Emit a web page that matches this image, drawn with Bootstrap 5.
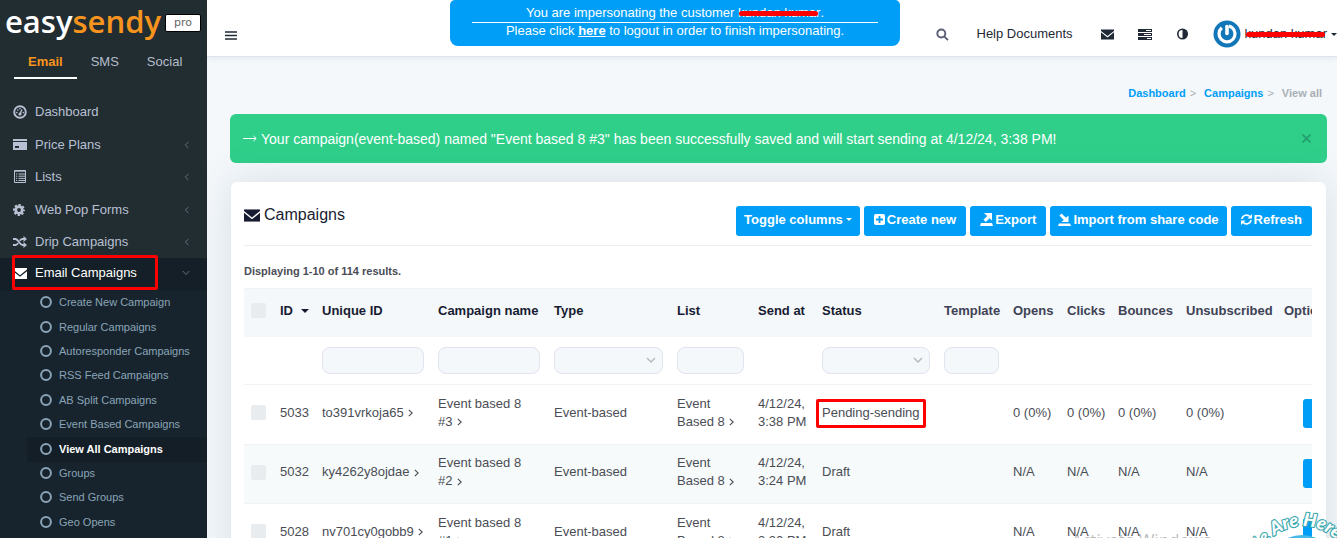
<!DOCTYPE html>
<html lang="en">
<head>
<meta charset="utf-8">
<meta name="viewport" content="width=device-width, initial-scale=1">
<title>Campaigns | View all</title>
<link href="https://cdn.jsdelivr.net/npm/bootstrap@5.3.0/dist/css/bootstrap.min.css" rel="stylesheet">
<style>
  :root { --brand: #009ef7; --accent: #f7941d; --mark: #ff0000; --canvas: #f4f8fb; }
  body { font-family: "Liberation Sans", Arial, sans-serif; font-size: 13px; line-height: 18px; color: #4a4d55; background: var(--canvas); }
  svg { display: block; flex: none; }
  a { text-decoration: none; }

  /* sidebar */
  .side { width: 207px; background: #222d32; }
  .logo { height: 42px; padding-left: 5px; font: 600 31px/42px "Open Sans", sans-serif; color: #fff; }
  .logo .orange { color: var(--accent); }
  .logo .tag { font: 11px/15px "DejaVu Sans", sans-serif; color: #666; background: #fff; border: 1px solid #000; border-radius: 2px; width: 36px; height: 18px; margin: 4px 0 0 4px; text-align: center; }
  .tabs { padding-left: 14px; }
  .tabs a { padding: 11px 14px 6px; color: #b4bdcb; border-bottom: 2px solid transparent; }
  .tabs a.on { color: var(--accent); font-weight: 700; border-color: #fff; }
  .menu { margin-top: 17px; }
  .menu > li > a { height: 32px; padding: 0 17px 1px 13px; color: #b9c0d3; }
  .menu > li:nth-child(even) { padding-top: 1px; }
  .menu .txt { margin-left: 8px; }
  .menu .chev { margin-left: auto; color: #5d6f7d; }
  .menu .open { background: #151f27; }
  .menu .open > a { color: #fff; position: relative; padding-bottom: 4px; }
  .menu .open > a::after { content: ""; position: absolute; left: 12px; top: -4px; width: 146px; height: 35px; border: 3px solid var(--mark); border-radius: 2px; }
  .sub { display: grid; grid-auto-rows: 1fr; height: 244px; background: #18242d; }
  .sub-wrap { background: #18242d; height: 300px; }
  .sub a { margin-left: 27px; padding: 0 0 2px 13px; color: #8aa4b8; font-size: 11px; gap: 7px; height: 100%; }
  .sub a.on { background: #141e26; color: #fff; font-weight: 700; }
  .sub svg { color: #8aa4b8; }

  /* top bar */
  .topbar { height: 57px; background: #fff; border-bottom: 1px solid #dfe4ea; box-shadow: 0 1px 6px rgba(60,80,110,.1); padding-left: 18px; color: #1f2a36; }
  .bars { padding: 31px 0 0; color: #4a5568; }
  .imp { width: 450px; height: 46px; margin-left: 213px; background: var(--brand); color: #fff; border-radius: 5px 5px 8px 8px; padding: 4px 22px 0; text-align: center; }
  .imp div { border-bottom: 1px solid #fff; }
  .imp p { line-height: 16px; }
  .imp a { color: #fff; font-weight: 700; text-decoration: underline; }
  .redact { position: relative; display: inline-block; }
  .redact::after { content: ""; position: absolute; left: 1px; right: 2px; top: 7px; height: 5px; background: var(--mark); border-radius: 3px; }
  .tools { margin-top: 20px; }
  .tools a { color: inherit; }
  .tools button, .bars, .x-btn { background: none; border: 0; padding-left: 0; padding-right: 0; color: inherit; }

  /* page body */
  .page { padding: 27px 10px 0 23px; }
  .crumbs { font-size: 11px; font-weight: 700; padding-right: 5px; margin-bottom: 12px; color: #a9afb5; }
  .crumbs a { color: var(--brand); }
  .crumbs .sep { font-weight: 400; }
  .note { height: 49px; background: #2fcf8a; color: #fff; border-radius: 6px; padding: 0 15px 0 13px; font-size: 14px; }
  .panel { margin: 19px 1px 0; padding: 24px 14px 0 13px; background: #fff; border-radius: 6px; box-shadow: 0 0 40px rgba(70,90,110,.16); min-height: 460px; }
  .panel-top { height: 40px; border-bottom: 1px solid #eceef1; }
  .panel-top h1 { font-size: 16px; line-height: 18px; font-weight: 400; color: #181c32; }
  .act { height: 30px; padding: 0 10px 3px; font-size: 13px; font-weight: 700; color: #fff; background: var(--brand); border: 0; border-radius: 3px; white-space: nowrap; gap: 2px; }
  .act.snug { padding-left: 8px; padding-right: 8px; }
  .act.tog { gap: 3px; }
  .tri { width: 0; height: 0; border: 3px solid transparent; border-top-color: currentColor; border-bottom: 0; }
  .tri.big { border-width: 4px 4px 0; }
  .sum { font-size: 11px; font-weight: 700; padding: 16px 0 8px; }

  /* results grid */
  .grid { table-layout: fixed; width: 1134px; border-collapse: collapse; }
  .grid th, .grid td { padding: 0 7px; vertical-align: middle; }
  .grid td { border-top: 1px solid #f0f2f4; height: 60px; padding-bottom: 4px; }
  .grid th { height: 48px; background: var(--canvas); border-top: 1px solid #f0f2f4; white-space: nowrap; color: #3f4254; padding-bottom: 4px; }
  .grid th a { color: #181c32; }
  .grid .filters td { height: 48px; padding-bottom: 0; border-top: 0; }
  .grid .alt td { background: #f6fafb; height: 59px; }
  .grid td a { color: inherit; }
  .fld { display: block; width: 100%; height: 27px; border: 1px solid #e1e3ee; border-radius: 8px; background-color: var(--canvas); appearance: none; }
  select.fld { background-image: url("data:image/svg+xml,%3Csvg xmlns='http://www.w3.org/2000/svg' width='10' height='6'%3E%3Cpath d='M1 1l4 4 4-4' fill='none' stroke='%23b5b9c0' stroke-width='1.5'/%3E%3C/svg%3E"); background-repeat: no-repeat; background-position: right 6px center; }
  .tick { display: block; appearance: none; width: 15px; height: 15px; background: #e8ecef; border-radius: 2px; margin: 0; }
  .grid td.opt { padding-left: 26px; padding-bottom: 0; }
  .opt .act { width: 60px; height: 29px; }
  .ringed { position: relative; }
  .ringed::after { content: ""; position: absolute; left: -6px; top: -5px; width: 110px; height: 29px; border: 3px solid var(--mark); border-radius: 2px; }
  .fwd { display: inline-block; margin-left: 1px; }

  /* overlays */
  .wm { position: absolute; right: 126px; bottom: -14px; font: 17px/24px "Open Sans", sans-serif; color: rgba(120,120,120,.5); white-space: nowrap; }
  .chat { position: absolute; right: 0; bottom: 0; }
</style>
</head>
<body>
<svg width="0" height="0" class="position-absolute" aria-hidden="true">
  <symbol id="mail" viewBox="0 0 14 11"><path fill="currentColor" d="M0 0h14v1.6L7 7.2 0 1.6zM0 3.2l7 5.6 7-5.6V11H0z"/></symbol>
  <symbol id="left" viewBox="0 0 6 8"><path d="M4.5 1L1.2 4l3.300 3" fill="none" stroke="currentColor"/></symbol>
  <symbol id="right" viewBox="0 0 5 8"><path d="M.8.8L4.200 4 .8 7.200" fill="none" stroke="currentColor" stroke-width="1.100"/></symbol>
  <symbol id="ring" viewBox="0 0 12 12"><circle cx="6" cy="6" r="4.900" fill="none" stroke="currentColor" stroke-width="2"/></symbol>
</svg>
<div class="d-flex vh-100 overflow-hidden position-relative">
  <aside class="side flex-shrink-0 overflow-hidden">
    <div class="logo d-flex align-items-center"><span>easy<span class="orange">sendy</span></span><span class="tag">pro</span></div>
    <nav class="tabs d-flex"><a href="#" class="on">Email</a><a href="#">SMS</a><a href="#">Social</a></nav>
    <ul class="menu list-unstyled mb-0">
      <li><a href="#" class="d-flex align-items-center"><svg width="14" height="14" viewBox="0 0 14 14"><g fill="none" stroke="currentColor"><circle cx="7" cy="7" r="5.800" stroke-width="1.900"/><path d="M7 9l2-4.500" stroke-width="1.400"/></g><g fill="currentColor"><circle cx="7" cy="9" r="1.600"/><circle cx="3.800" cy="7.600" r=".8"/><circle cx="4.800" cy="5" r=".8"/><circle cx="7" cy="3.800" r=".8"/><circle cx="10.300" cy="7.600" r=".8"/></g></svg><span class="txt">Dashboard</span></a></li>
      <li><a href="#" class="d-flex align-items-center"><svg width="14" height="11" viewBox="0 0 14 11"><path fill="currentColor" fill-rule="evenodd" d="M0 0h14v2H0zM0 3h14v8H0zM2 7v2h4V7z"/></svg><span class="txt">Price Plans</span><svg class="chev" width="6" height="8"><use href="#left"/></svg></a></li>
      <li><a href="#" class="d-flex align-items-center"><svg width="14" height="13" viewBox="0 0 14 13"><path fill="none" stroke="currentColor" d="M1.500.500h11v12h-11z"/><path stroke="currentColor" d="M1 1.200h12M3 4h1.200M5.500 4H12M3 6.200h1.200M5.500 6.200H12M3 8.400h1.200M5.500 8.400H12M3 10.500h1.200M5.500 10.500H12"/></svg><span class="txt">Lists</span><svg class="chev" width="6" height="8"><use href="#left"/></svg></a></li>
      <li><a href="#" class="d-flex align-items-center"><svg width="14" height="12" viewBox="0 0 14 12"><circle cx="6" cy="6" r="3.300" fill="none" stroke="currentColor" stroke-width="2.800"/><circle cx="6" cy="6" r="5" fill="none" stroke="currentColor" stroke-width="2" stroke-dasharray="2.200 1.730" stroke-dashoffset="1.100"/></svg><span class="txt">Web Pop Forms</span><svg class="chev" width="6" height="8"><use href="#left"/></svg></a></li>
      <li><a href="#" class="d-flex align-items-center"><svg width="14" height="12" viewBox="0 0 14 12"><path d="M0 3h2.500c3 0 4 6 7 6H11M0 9h2.500c1.200 0 2-.9 2.600-1.900M6.800 4.800C7.500 3.700 8.300 3 9.500 3H11" fill="none" stroke="currentColor" stroke-width="1.800"/><path fill="currentColor" d="M10.500 0L14 3l-3.500 3zM10.500 6L14 9l-3.500 3z"/></svg><span class="txt">Drip Campaigns</span><svg class="chev" width="6" height="8"><use href="#left"/></svg></a></li>
      <li class="open"><a href="#" class="d-flex align-items-center"><svg width="14" height="11"><use href="#mail"/></svg><span class="txt">Email Campaigns</span><svg class="chev" width="8" height="6" viewBox="0 0 8 6"><path d="M.8 1L4 4.500 7.200 1" fill="none" stroke="currentColor"/></svg></a>
        <div class="sub-wrap">
        <ul class="sub list-unstyled">
          <li><a href="#" class="d-flex align-items-center"><svg width="12" height="12"><use href="#ring"/></svg>Create New Campaign</a></li>
          <li><a href="#" class="d-flex align-items-center"><svg width="12" height="12"><use href="#ring"/></svg>Regular Campaigns</a></li>
          <li><a href="#" class="d-flex align-items-center"><svg width="12" height="12"><use href="#ring"/></svg>Autoresponder Campaigns</a></li>
          <li><a href="#" class="d-flex align-items-center"><svg width="12" height="12"><use href="#ring"/></svg>RSS Feed Campaigns</a></li>
          <li><a href="#" class="d-flex align-items-center"><svg width="12" height="12"><use href="#ring"/></svg>AB Split Campaigns</a></li>
          <li><a href="#" class="d-flex align-items-center"><svg width="12" height="12"><use href="#ring"/></svg>Event Based Campaigns</a></li>
          <li><a href="#" class="on d-flex align-items-center"><svg width="12" height="12"><use href="#ring"/></svg>View All Campaigns</a></li>
          <li><a href="#" class="d-flex align-items-center"><svg width="12" height="12"><use href="#ring"/></svg>Groups</a></li>
          <li><a href="#" class="d-flex align-items-center"><svg width="12" height="12"><use href="#ring"/></svg>Send Groups</a></li>
          <li><a href="#" class="d-flex align-items-center"><svg width="12" height="12"><use href="#ring"/></svg>Geo Opens</a></li>
        </ul>
        </div>
      </li>
    </ul>
  </aside>

  <div class="flex-grow-1 overflow-hidden">
    <header class="topbar d-flex align-items-start">
      <button class="bars" type="button" aria-label="Menu"><svg width="12" height="9" viewBox="0 0 12 9"><path stroke="currentColor" stroke-width="1.600" d="M0 1h12M0 4.500h12M0 8h12"/></svg></button>
      <div class="imp flex-shrink-0">
        <div>You are impersonating the customer <span class="redact">kundan kumar</span>.</div>
        <p class="mb-0">Please click <a href="#">here</a> to logout in order to finish impersonating.</p>
      </div>
      <nav class="tools d-flex align-items-center flex-grow-1 justify-content-end text-nowrap">
        <button type="button" aria-label="Search" class="p-0 me-4"><svg class="me-1" width="13" height="13" viewBox="0 0 13 13"><g fill="none" stroke="#5b5f75" stroke-width="1.900"><circle cx="5.300" cy="5.500" r="4"/><path d="M8.400 8.600l3.600 3.600"/></g></svg></button>
        <a href="#" class="me-4">Help Documents</a>
        <a href="#" class="me-4 ps-1" aria-label="Messages"><svg width="13" height="11"><use href="#mail"/></svg></a>
        <a href="#" class="me-4" aria-label="Tasks"><svg width="14" height="11" viewBox="0 0 14 11"><path fill="currentColor" fill-rule="evenodd" d="M0 0h14v3H0zM8 1v1h5V1zM0 4h14v3H0zM6 5v1h7V5zM0 8h14v3H0zM9 9v1h4V9z"/></svg></a>
        <button type="button" class="p-0 me-4" aria-label="Contrast"><svg width="13" height="12" viewBox="0 0 13 12"><circle cx="6.500" cy="6" r="4.700" fill="none" stroke="currentColor" stroke-width="1.600"/><path fill="currentColor" d="M6.500 1v10a5 5 0 000-10z"/></svg></button>
        <a href="#" class="d-flex align-items-center">
          <svg class="me-1" width="28" height="28" viewBox="0 0 28 28"><circle cx="14" cy="14" r="13.500" fill="#1277b8"/><path d="M8.800 7.800A8 8 0 1019 7.600c-1-.9-2-1.300-3-1.500" fill="none" stroke="#fff" stroke-width="3.200"/><path d="M14 6.500v7" stroke="#fff" stroke-width="3.600" stroke-linecap="round"/></svg>
          <span class="redact">kundan kumar</span><span class="tri ms-1"></span></a>
      </nav>
    </header>

    <main class="page">
      <nav class="crumbs d-flex justify-content-end gap-1"><a href="#">Dashboard</a><span class="sep me-1">&gt;</span><a href="#">Campaigns</a><span class="sep me-1">&gt;</span><span>View all</span></nav>
      <div class="note d-flex align-items-center" role="alert"><svg class="me-1" width="14" height="7" viewBox="0 0 14 7"><path d="M0 3.500h13M10.500 1L13.200 3.500 10.500 6" fill="none" stroke="#fff"/></svg><span>Your campaign(event-based) named "Event based 8 #3" has been successfully saved and will start sending at 4/12/24, 3:38 PM!</span>
        <button type="button" class="x-btn ms-auto" aria-label="Close"><svg width="11" height="9" viewBox="0 0 11 9"><path d="M1.500.500l8 8M9.500.500l-8 8" stroke="#25a06f" stroke-width="1.800"/></svg></button></div>

      <section class="panel">
        <div class="panel-top d-flex align-items-start">
          <h1 class="d-flex align-items-center mb-0"><svg width="16" height="13" class="me-1" viewBox="0 0 14 11"><use href="#mail"/></svg>Campaigns</h1>
          <div class="ms-auto d-flex gap-1 flex-shrink-0">
            <button type="button" class="act snug tog d-flex align-items-center">Toggle columns<span class="tri"></span></button>
            <button type="button" class="act d-flex align-items-center"><svg width="11" height="11" viewBox="0 0 11 11"><rect width="11" height="11" rx="1.800" fill="#fff"/><path d="M5.500 2v7M2 5.500h7" stroke="#009ef7" stroke-width="1.800"/></svg>Create new</button>
            <button type="button" class="act d-flex align-items-center"><svg width="13" height="14" viewBox="0 0 13 14"><path fill="#fff" d="M1 10h11l1 3H0zM4 0h8v7.500L9.600 5.200 5.800 9 3.500 6.800l3.700-3.900z"/></svg>Export</button>
            <button type="button" class="act snug d-flex align-items-center"><svg width="13" height="14" viewBox="0 0 13 14"><path fill="#fff" d="M1 10.500h11l1 2.500H0zM10.500 9H3.500l2.300-2L1.500 2.500l2-2L8 4.800 10.500 2.500z"/></svg>Import from share code</button>
            <button type="button" class="act d-flex align-items-center"><svg width="11" height="11" viewBox="0 0 11 11"><path d="M1 5a4.500 4.500 0 018-2.200M10 6a4.500 4.500 0 01-8 2.200" fill="none" stroke="#fff" stroke-width="1.700"/><path fill="#fff" d="M11 0v4.500H6.500zM0 11V6.500h4.500z"/></svg>Refresh</button>
          </div>
        </div>
        <div class="sum">Displaying 1-10 of 114 results.</div>
        <div class="overflow-hidden">
          <table class="grid">
            <colgroup><col width="29"><col width="42"><col width="116"><col width="116"><col width="123"><col width="81"><col width="64"><col width="122"><col width="69"><col width="54"><col width="51"><col width="68"><col width="98"><col width="101"></colgroup>
            <thead>
              <tr><th><input type="checkbox" class="tick" aria-label="Select all"></th><th><a href="#" class="d-flex align-items-center">ID<span class="tri big ms-2"></span></a></th><th><a href="#">Unique ID</a></th><th><a href="#">Campaign name</a></th><th><a href="#">Type</a></th><th><a href="#">List</a></th><th><a href="#">Send at</a></th><th><a href="#">Status</a></th><th>Template</th><th>Opens</th><th>Clicks</th><th>Bounces</th><th>Unsubscribed</th><th>Options</th></tr>
            </thead>
            <tbody>
              <tr class="filters"><td></td><td></td><td><input class="fld" aria-label="Unique ID"></td><td><input class="fld" aria-label="Campaign name"></td><td><select class="fld" aria-label="Type"><option></option></select></td><td><input class="fld" aria-label="List"></td><td></td><td><select class="fld" aria-label="Status"><option></option></select></td><td><input class="fld" aria-label="Template"></td><td></td><td></td><td></td><td></td><td></td></tr>
              <tr><td><input type="checkbox" class="tick" aria-label="Select 5033"></td><td>5033</td><td><a href="#">to391vrkoja65 <svg class="fwd" width="5" height="8"><use href="#right"/></svg></a></td><td><a href="#">Event based 8<br>#3 <svg class="fwd" width="5" height="8"><use href="#right"/></svg></a></td><td>Event-based</td><td><a href="#">Event<br>Based 8 <svg class="fwd" width="5" height="8"><use href="#right"/></svg></a></td><td>4/12/24,<br>3:38 PM</td><td><div class="ringed">Pending-sending</div></td><td></td><td class="text-nowrap">0 (0%)</td><td class="text-nowrap">0 (0%)</td><td class="text-nowrap">0 (0%)</td><td class="text-nowrap">0 (0%)</td><td class="opt"><button type="button" class="act" aria-label="Actions"></button></td></tr>
              <tr class="alt"><td><input type="checkbox" class="tick" aria-label="Select 5032"></td><td>5032</td><td><a href="#">ky4262y8ojdae <svg class="fwd" width="5" height="8"><use href="#right"/></svg></a></td><td><a href="#">Event based 8<br>#2 <svg class="fwd" width="5" height="8"><use href="#right"/></svg></a></td><td>Event-based</td><td><a href="#">Event<br>Based 8 <svg class="fwd" width="5" height="8"><use href="#right"/></svg></a></td><td>4/12/24,<br>3:24 PM</td><td>Draft</td><td></td><td>N/A</td><td>N/A</td><td>N/A</td><td>N/A</td><td class="opt"><button type="button" class="act" aria-label="Actions"></button></td></tr>
              <tr><td><input type="checkbox" class="tick" aria-label="Select 5028"></td><td>5028</td><td><a href="#">nv701cy0gobb9 <svg class="fwd" width="5" height="8"><use href="#right"/></svg></a></td><td><a href="#">Event based 8<br>#1 <svg class="fwd" width="5" height="8"><use href="#right"/></svg></a></td><td>Event-based</td><td><a href="#">Event<br>Based 8 <svg class="fwd" width="5" height="8"><use href="#right"/></svg></a></td><td>4/12/24,<br>3:20 PM</td><td>Draft</td><td></td><td>N/A</td><td>N/A</td><td>N/A</td><td>N/A</td><td class="opt"><button type="button" class="act" aria-label="Actions"></button></td></tr>
            </tbody>
          </table>
        </div>
      </section>
    </main>
  </div>

  <div class="wm">Activate Windows</div>
  <svg class="chat" width="90" height="34" viewBox="0 0 90 34" role="img" aria-label="We Are Here">
    <circle cx="55" cy="67" r="36" fill="#4cb8e6"/>
    <path id="arc" d="M9 69a47 47 0 0194 0" fill="none"/>
    <text font-family="Lato, sans-serif" font-weight="900" font-style="italic" font-size="18" fill="#fff" stroke="#3fa9b0" stroke-width="2.400" stroke-linejoin="round" paint-order="stroke"><textPath href="#arc" startOffset="14">We Are Here!</textPath></text>
  </svg>
</div>
<script src="https://cdn.jsdelivr.net/npm/bootstrap@5.3.0/dist/js/bootstrap.bundle.min.js"></script>
</body>
</html>
